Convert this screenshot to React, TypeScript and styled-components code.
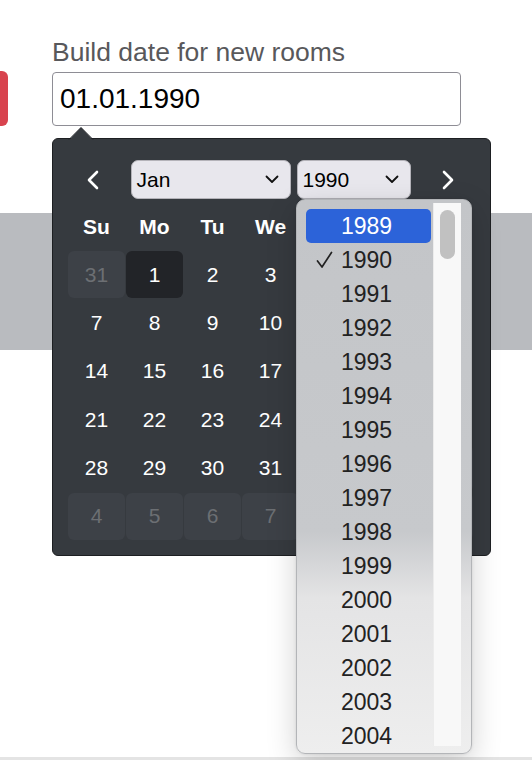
import React from "react";
import styled, { createGlobalStyle } from "styled-components";

const GlobalStyle = createGlobalStyle`
  html, body { margin: 0; padding: 0; background: #ffffff; }
  body {
    font-family: "Liberation Sans", Arial, sans-serif;
    width: 532px;
    height: 760px;
    overflow: hidden;
  }
  * { box-sizing: border-box; }
`;

const Page = styled.div`
  position: relative;
  height: 760px;
  padding-top: 37px;
  display: flex;
  flex-direction: column;
`;

const FieldGrid = styled.div`
  display: grid;
  grid-template-columns: 52px 409px;
  grid-template-rows: 30px 54px;
  row-gap: 5px;
  position: relative;
  z-index: 2;
`;

const SideButton = styled.div`
  grid-column: 1;
  grid-row: 2;
  width: 8px;
  margin-top: -1px;
  background: #d8434e;
  border-radius: 0 6px 6px 0;
`;

const Label = styled.label`
  grid-column: 2;
  grid-row: 1;
  font-size: 26.5px;
  line-height: 30px;
  color: #58585b;
  white-space: nowrap;
`;

const InputWrap = styled.div`
  grid-column: 2;
  grid-row: 2;
  position: relative;
`;

const DateInput = styled.div`
  height: 54px;
  border: 1px solid #8e8d95;
  border-radius: 4px;
  padding-left: 7px;
  display: flex;
  align-items: center;
  font-size: 28px;
  color: #000;
`;

const Popup = styled.div`
  position: absolute;
  top: calc(100% + 12px);
  left: 0;
  width: 439px;
  height: 418px;
  background: #363a3f;
  border: 1px solid #1d1f22;
  border-radius: 6px;
  padding: 21px 17px 15px 15px;
  color: #fff;
`;

const Caret = styled.svg`
  position: absolute;
  top: -13px;
  left: 15px;
`;

const Header = styled.div`
  height: 39px;
  display: flex;
  align-items: center;
  justify-content: space-between;
`;

const NavButton = styled.div`
  width: 50px;
  height: 39px;
  display: flex;
  align-items: center;
  justify-content: center;
`;

const SelectGroup = styled.div`
  display: flex;
  gap: 6px;
`;

const SelectBox = styled.div<{ $w: number }>`
  width: ${(p) => p.$w}px;
  height: 39px;
  background: #e8e7ed;
  border: 1px solid #b4b3b9;
  border-radius: 7px;
  display: flex;
  align-items: center;
  justify-content: space-between;
  padding: 0 11px 0 5px;
  font-size: 21px;
  color: #000;
`;

const DayNames = styled.div`
  margin-top: 4px;
  height: 48px;
  display: grid;
  grid-template-columns: repeat(7, 57px);
  column-gap: 1px;
  align-items: center;
`;

const DayName = styled.div`
  text-align: center;
  font-weight: bold;
  font-size: 21px;
`;

const DaysGrid = styled.div`
  display: grid;
  grid-template-columns: repeat(7, 57px);
  grid-auto-rows: 47px;
  column-gap: 1px;
  row-gap: 1.4px;
`;

type Variant = "normal" | "outside" | "selected";

const DayCell = styled.div<{ $v: Variant }>`
  display: flex;
  align-items: center;
  justify-content: center;
  border-radius: 6px;
  font-size: 21px;
  color: ${(p) => (p.$v === "outside" ? "#6c6f73" : "#ffffff")};
  background: ${(p) =>
    p.$v === "outside" ? "#3d4147" : p.$v === "selected" ? "#222428" : "transparent"};
`;

const Dropdown = styled.div`
  position: absolute;
  left: 243px;
  top: 60px;
  width: 176px;
  height: 555px;
  border-radius: 9px;
  border: 1px solid #b3b5b8;
  background: linear-gradient(
    to bottom,
    #c3c5c8 0%,
    #c7c9cc 60%,
    #e4e4e5 72%,
    #eeeeee 100%
  );
  box-shadow: 0 10px 30px rgba(0, 0, 0, 0.18), 0 0 3px rgba(0, 0, 0, 0.1);
  display: flex;
  padding: 3px 10px 7px 9px;
  overflow: hidden;
`;

const YearList = styled.div`
  width: 125px;
  padding-top: 6px;
  overflow: hidden;
  display: flex;
  flex-direction: column;
`;

const YearItem = styled.div<{ $active?: boolean }>`
  flex: 0 0 34px;
  height: 34px;
  border-radius: 5px;
  display: flex;
  align-items: center;
  position: relative;
  padding-left: 35px;
  font-size: 23px;
  color: ${(p) => (p.$active ? "#ffffff" : "#222222")};
  background: ${(p) => (p.$active ? "#2c63d9" : "transparent")};
`;

const Check = styled.svg`
  position: absolute;
  left: 10px;
  top: 8px;
`;

const Track = styled.div`
  width: 28px;
  margin-left: 2px;
  background: #f8f8f8;
  border-left: 1px solid #ececec;
  position: relative;
`;

const Thumb = styled.div`
  position: absolute;
  left: 6px;
  top: 7px;
  width: 15px;
  height: 49px;
  border-radius: 8px;
  background: #c1c1c1;
`;

const Band = styled.div`
  margin-top: 87px;
  height: 137px;
  background: #b9bbbf;
`;

const BottomLine = styled.div`
  margin-top: auto;
  height: 3px;
  background: #e4e4e4;
`;

const Chevron = ({ dir }: { dir: "left" | "right" }) => (
  <svg width="14" height="20" viewBox="0 0 14 20">
    <path
      d={dir === "left" ? "M11 2 L3 10 L11 18" : "M3 2 L11 10 L3 18"}
      fill="none"
      stroke="#ffffff"
      strokeWidth="2.6"
      strokeLinecap="round"
      strokeLinejoin="round"
    />
  </svg>
);

const DownChevron = () => (
  <svg width="14" height="9" viewBox="0 0 14 9">
    <path
      d="M1.5 1.5 L7 7 L12.5 1.5"
      fill="none"
      stroke="#111"
      strokeWidth="1.8"
      strokeLinecap="round"
      strokeLinejoin="round"
    />
  </svg>
);

const dayNames = ["Su", "Mo", "Tu", "We", "Th", "Fr", "Sa"];

const days: { d: number; v: Variant }[] = [
  { d: 31, v: "outside" },
  ...Array.from({ length: 31 }, (_, i) => ({
    d: i + 1,
    v: (i === 0 ? "selected" : "normal") as Variant,
  })),
  ...Array.from({ length: 10 }, (_, i) => ({ d: i + 1, v: "outside" as Variant })),
];

const years = Array.from({ length: 16 }, (_, i) => 1989 + i);

export default function App() {
  return (
    <>
      <GlobalStyle />
      <Page>
        <FieldGrid>
          <Label>Build date for new rooms</Label>
          <SideButton />
          <InputWrap>
            <DateInput>01.01.1990</DateInput>
            <Popup>
              <Caret width="26" height="14" viewBox="0 0 26 14">
                <path d="M1 14 L13 1.5 L25 14 Z" fill="#363a3f" />
                <path
                  d="M1 13.5 L13 1.5 L25 13.5"
                  fill="none"
                  stroke="#1d1f22"
                  strokeWidth="1"
                />
              </Caret>
              <Header>
                <NavButton>
                  <Chevron dir="left" />
                </NavButton>
                <SelectGroup>
                  <SelectBox $w={160}>
                    <span>Jan</span>
                    <DownChevron />
                  </SelectBox>
                  <SelectBox $w={114}>
                    <span>1990</span>
                    <DownChevron />
                  </SelectBox>
                </SelectGroup>
                <NavButton>
                  <Chevron dir="right" />
                </NavButton>
              </Header>
              <DayNames>
                {dayNames.map((n) => (
                  <DayName key={n}>{n}</DayName>
                ))}
              </DayNames>
              <DaysGrid>
                {days.map((c, i) => (
                  <DayCell key={i} $v={c.v}>
                    {c.d}
                  </DayCell>
                ))}
              </DaysGrid>
              <Dropdown>
                <YearList>
                  {years.map((y) => (
                    <YearItem key={y} $active={y === 1989}>
                      {y === 1990 && (
                        <Check width="17" height="18" viewBox="0 0 17 18">
                          <path
                            d="M1.5 10 L6 16 L15.5 1.5"
                            fill="none"
                            stroke="#222"
                            strokeWidth="1.7"
                            strokeLinecap="round"
                            strokeLinejoin="round"
                          />
                        </Check>
                      )}
                      {y}
                    </YearItem>
                  ))}
                </YearList>
                <Track>
                  <Thumb />
                </Track>
              </Dropdown>
            </Popup>
          </InputWrap>
        </FieldGrid>
        <Band />
        <BottomLine />
      </Page>
    </>
  );
}
